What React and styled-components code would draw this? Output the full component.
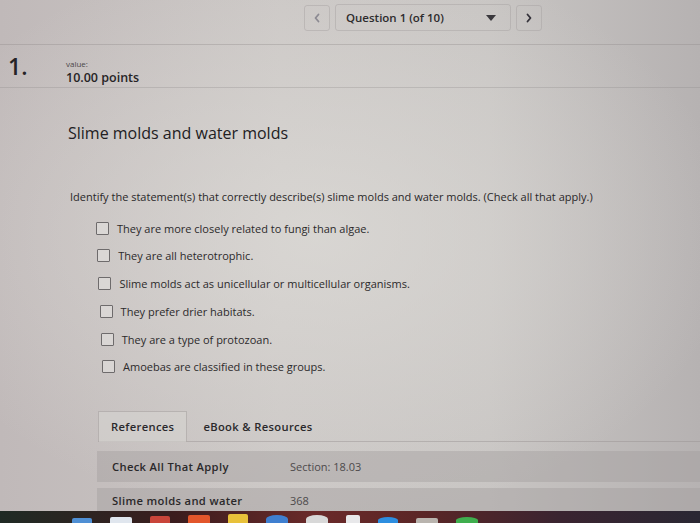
import styled, { createGlobalStyle } from "styled-components";

const GlobalStyle = createGlobalStyle`
  html, body {
    margin: 0;
    padding: 0;
    background: #c6c2c1;
  }
  body {
    font-family: "Open Sans", "Liberation Sans", sans-serif;
    color: #2b2929;
  }
`;

const Screen = styled.div`
  width: 700px;
  height: 523px;
  overflow: hidden;
  display: flex;
  flex-direction: column;
  background:
    radial-gradient(ellipse 60% 55% at 45% 45%, rgba(222, 220, 216, 0.7), rgba(222, 220, 216, 0) 100%),
    linear-gradient(90deg, #c0b9b9 0%, #cbc7c5 40%, #c8c5c3 70%, #b6b2b2 100%);
`;

const Page = styled.div`
  flex: 1;
  display: flex;
  flex-direction: column;
  min-height: 0;
`;

const TopBar = styled.div`
  height: 45px;
  flex-shrink: 0;
  display: flex;
  align-items: flex-start;
  padding: 4px 0 0 304px;
  gap: 5px;
  border-bottom: 1px solid rgba(140, 135, 135, 0.35);
  box-sizing: border-box;
`;

const NavButton = styled.div`
  width: 26px;
  height: 26px;
  margin-top: 1px;
  display: flex;
  align-items: center;
  justify-content: center;
  border: 1px solid rgba(160, 155, 155, 0.4);
  border-radius: 3px;
  color: ${(p) => (p.$dim ? "#8c8a92" : "#34323a")};
  box-sizing: border-box;
`;

const Dropdown = styled.div`
  width: 176px;
  height: 27px;
  display: flex;
  align-items: center;
  justify-content: space-between;
  padding: 0 14px 0 10px;
  border: 1px solid rgba(160, 155, 155, 0.4);
  border-radius: 3px;
  font-size: 11.5px;
  font-weight: 600;
  color: #2d2b2d;
  box-sizing: border-box;
`;

const Caret = styled.span`
  width: 0;
  height: 0;
  border-left: 5px solid transparent;
  border-right: 5px solid transparent;
  border-top: 6px solid #3a383c;
`;

const Header = styled.div`
  height: 43px;
  flex-shrink: 0;
  display: flex;
  align-items: flex-start;
  padding: 8px 0 0 8px;
  border-bottom: 1px solid rgba(140, 135, 135, 0.3);
  box-sizing: border-box;
`;

const Number = styled.div`
  width: 58px;
  font-size: 23px;
  font-weight: 600;
  line-height: 26px;
  color: #252326;
`;

const ValueBlock = styled.div`
  display: flex;
  flex-direction: column;
  padding-top: 6px;
`;

const ValueLabel = styled.span`
  font-size: 8px;
  line-height: 10px;
  color: #4a4748;
`;

const Points = styled.span`
  font-size: 12.5px;
  font-weight: 600;
  line-height: 17px;
  color: #262426;
`;

const Body = styled.div`
  display: flex;
  flex-direction: column;
  padding-left: 68px;
`;

const Title = styled.h2`
  margin: 35px 0 0;
  font-size: 16px;
  font-weight: 500;
  line-height: 20px;
  color: #222022;
`;

const Prompt = styled.p`
  margin: 47px 0 0 2px;
  font-size: 11px;
  line-height: 14px;
  color: #2a2829;
`;

const Options = styled.div`
  display: flex;
  flex-direction: column;
  gap: 13.8px;
  margin-top: 17px;
  padding-left: 28px;
`;

const Option = styled.label`
  display: flex;
  align-items: center;
  gap: 8px;
  height: 14px;
  padding-left: ${(p) => p.$shift}px;
  font-size: 11px;
  color: #2c2a2b;
`;

const Box = styled.span`
  width: 11px;
  height: 11px;
  border: 1.5px solid #6e6b6c;
  border-radius: 1px;
  background: rgba(232, 230, 228, 0.5);
  flex-shrink: 0;
`;

const Tabs = styled.div`
  display: flex;
  align-items: flex-end;
  margin-top: 37px;
  margin-left: 30px;
  border-bottom: 1px solid rgba(150, 145, 145, 0.45);
`;

const Tab = styled.div`
  height: 31px;
  display: flex;
  align-items: center;
  padding: 0 ${(p) => (p.$active ? "12px" : "15px")};
  font-size: 11.2px;
  font-weight: 600;
  letter-spacing: 0.35px;
  color: #2a282b;
  box-sizing: border-box;
  border: 1px solid ${(p) => (p.$active ? "rgba(150, 145, 145, 0.45)" : "transparent")};
  border-bottom: none;
  margin-bottom: -1px;
  background: ${(p) => (p.$active ? "rgba(214, 212, 209, 0.6)" : "transparent")};
`;

const InfoRow = styled.div`
  display: grid;
  grid-template-columns: 178px 1fr;
  align-items: center;
  height: ${(p) => p.$h}px;
  margin-left: 29px;
  margin-top: ${(p) => p.$mt}px;
  padding-left: 15px;
  background: rgba(160, 156, 155, 0.4);
  font-size: 11px;
`;

const RowLabel = styled.span`
  font-weight: 600;
  letter-spacing: 0.35px;
  font-size: 11.2px;
  color: #2a282a;
`;

const RowValue = styled.span`
  color: #4d4a4b;
`;

const Dock = styled.div`
  height: 12px;
  flex-shrink: 0;
  display: flex;
  align-items: flex-end;
  gap: 18px;
  padding-left: 72px;
  background: linear-gradient(90deg, #1f2a24 0%, #3b1d1e 25%, #6a2a2a 45%, #5b2626 60%, #3a2430 80%, #2a2733 100%);
`;

const DockIcon = styled.span`
  width: ${(p) => p.$w}px;
  height: ${(p) => p.$h}px;
  border-radius: ${(p) => (p.$round ? "50% 50% 0 0" : "2px 2px 0 0")};
  background: ${(p) => p.$c};
`;

const options = [
  "They are more closely related to fungi than algae.",
  "They are all heterotrophic.",
  "Slime molds act as unicellular or multicellular organisms.",
  "They prefer drier habitats.",
  "They are a type of protozoan.",
  "Amoebas are classified in these groups.",
];

const dockIcons = [
  { w: 20, h: 5, c: "#4f8fd4" },
  { w: 22, h: 6, c: "#e0e6ee" },
  { w: 20, h: 7, c: "#c9453a" },
  { w: 22, h: 8, c: "#e2562b" },
  { w: 20, h: 9, c: "#e8c13a" },
  { w: 22, h: 8, c: "#3f7fd0", round: true },
  { w: 22, h: 8, c: "#d8d8d8", round: true },
  { w: 14, h: 8, c: "#e8e8ea" },
  { w: 20, h: 6, c: "#2d8ee0", round: true },
  { w: 22, h: 5, c: "#b9b4ae" },
  { w: 22, h: 6, c: "#3fae4e", round: true },
];

const Chevron = ({ dir }) => (
  <svg width="8" height="10" viewBox="0 0 8 10">
    <path
      d={dir === "left" ? "M5.5 1.5 L2.5 5 L5.5 8.5" : "M2.5 1.5 L5.5 5 L2.5 8.5"}
      fill="none"
      stroke="currentColor"
      strokeWidth="1.8"
      strokeLinecap="round"
      strokeLinejoin="round"
    />
  </svg>
);

const App = () => {
  return (
    <Screen>
      <GlobalStyle />
      <Page>
        <TopBar>
          <NavButton $dim>
            <Chevron dir="left" />
          </NavButton>
          <Dropdown>
            <span>Question 1 (of 10)</span>
            <Caret />
          </Dropdown>
          <NavButton>
            <Chevron dir="right" />
          </NavButton>
        </TopBar>
        <Header>
          <Number>1.</Number>
          <ValueBlock>
            <ValueLabel>value:</ValueLabel>
            <Points>10.00 points</Points>
          </ValueBlock>
        </Header>
        <Body>
          <Title>Slime molds and water molds</Title>
          <Prompt>
            Identify the statement(s) that correctly describe(s) slime molds and water molds. (Check all that
            apply.)
          </Prompt>
          <Options>
            {options.map((text, i) => (
              <Option key={text} $shift={i * 1.2}>
                <Box />
                <span>{text}</span>
              </Option>
            ))}
          </Options>
          <Tabs>
            <Tab $active>References</Tab>
            <Tab>eBook &amp; Resources</Tab>
          </Tabs>
          <InfoRow $h={31} $mt={9}>
            <RowLabel>Check All That Apply</RowLabel>
            <RowValue>Section: 18.03</RowValue>
          </InfoRow>
          <InfoRow $h={26} $mt={6}>
            <RowLabel>Slime molds and water</RowLabel>
            <RowValue>368</RowValue>
          </InfoRow>
        </Body>
      </Page>
      <Dock>
        {dockIcons.map((d, i) => (
          <DockIcon key={i} $w={d.w} $h={d.h} $c={d.c} $round={d.round} />
        ))}
      </Dock>
    </Screen>
  );
};

export default App;
